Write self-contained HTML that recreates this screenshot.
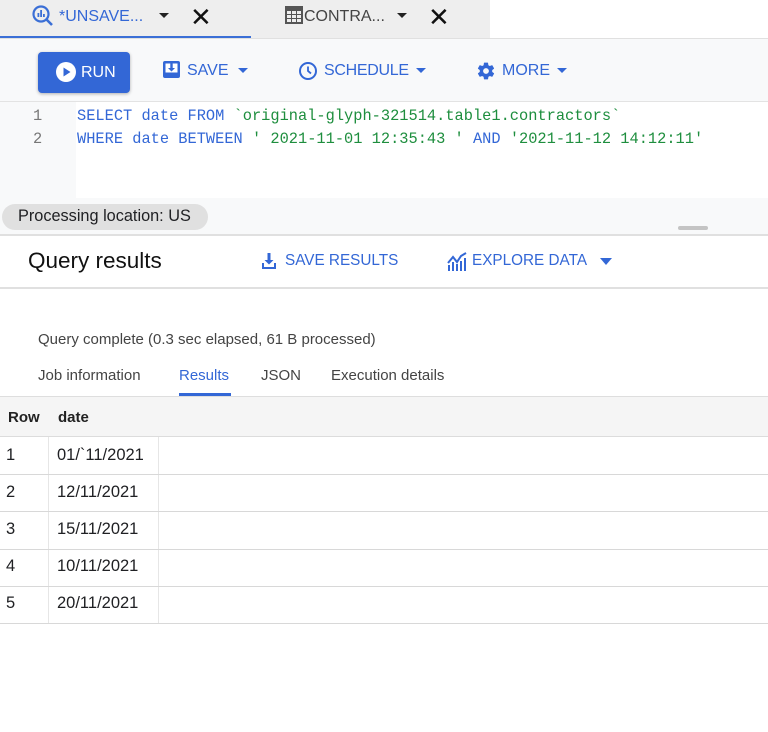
<!DOCTYPE html>
<html><head><meta charset="utf-8"><style>
*{margin:0;padding:0;box-sizing:border-box}
body{width:768px;height:732px;background:#fff;font-family:"Liberation Sans",sans-serif;position:relative;overflow:hidden;color:#202124}
.a{position:absolute;white-space:nowrap}
.blue{color:#3367d6}
.mono{font-family:"Liberation Mono",monospace;font-size:15.35px}
</style></head><body>
<div class="a" style="left:0;top:0;width:490px;height:38px;background:#eeeeee"></div>
<div class="a" style="left:0;top:36px;width:251px;height:3px;background:#3b6fd6"></div>
<div class="a" style="left:0;top:38px;width:768px;height:1px;background:#e0e0e0"></div>
<svg class="a" style="left:31px;top:4px" width="24" height="22" viewBox="0 0 24 22"><circle cx="10" cy="10" r="7.5" fill="none" stroke="#3b6fd6" stroke-width="2.2"/><line x1="15" y1="15" x2="21" y2="21" stroke="#3b6fd6" stroke-width="2.6"/><rect x="6.5" y="9" width="1.8" height="4" fill="#3b6fd6"/><rect x="9.2" y="6" width="1.8" height="7" fill="#3b6fd6"/><rect x="12" y="10" width="1.8" height="3" fill="#3b6fd6"/></svg>
<div class="a blue" style="left:59px;top:8px;font-size:16px">*UNSAVE...</div>
<div class="a" style="left:159px;top:13px;border-left:5px solid transparent;border-right:5px solid transparent;border-top:5px solid #222"></div>
<div class="a" style="left:190px;top:2px;font-size:26px;color:#111">✕</div>
<svg class="a" style="left:285px;top:6px" width="18" height="18" viewBox="0 0 18 18"><rect x="0" y="0" width="18" height="18" fill="#555"/><g fill="#eee"><rect x="2" y="5" width="4" height="3"/><rect x="7" y="5" width="4" height="3"/><rect x="12" y="5" width="4" height="3"/><rect x="2" y="9" width="4" height="3"/><rect x="7" y="9" width="4" height="3"/><rect x="12" y="9" width="4" height="3"/><rect x="2" y="13" width="4" height="3"/><rect x="7" y="13" width="4" height="3"/><rect x="12" y="13" width="4" height="3"/></g></svg>
<div class="a" style="left:304px;top:8px;font-size:16px;color:#444">CONTRA...</div>
<div class="a" style="left:397px;top:13px;border-left:5px solid transparent;border-right:5px solid transparent;border-top:5px solid #222"></div>
<div class="a" style="left:428px;top:2px;font-size:26px;color:#111">✕</div>
<div class="a" style="left:0;top:39px;width:768px;height:62px;background:#f8f9fa"></div>
<div class="a" style="left:38px;top:52px;width:92px;height:41px;background:#3367d6;border-radius:4px;box-shadow:0 1px 3px rgba(0,0,0,.3)"></div>
<svg class="a" style="left:56px;top:62px" width="20" height="20" viewBox="0 0 20 20"><circle cx="10" cy="10" r="10" fill="#fff"/><path d="M7.5 5.5L14.5 10L7.5 14.5Z" fill="#3367d6"/></svg>
<div class="a" style="left:81px;top:64px;font-size:16px;color:#fff">RUN</div>
<svg class="a" style="left:162px;top:60px" width="19" height="19" viewBox="0 0 19 19"><rect x="1" y="1" width="17" height="17" rx="2" fill="#3367d6"/><rect x="3.5" y="3.5" width="12" height="9" fill="#fff"/><path d="M8.3 3.5h2.4v4.5h2.3L9.5 11.5 6 8h2.3z" fill="#3367d6"/></svg>
<div class="a blue" style="left:187px;top:62px;font-size:16px">SAVE</div>
<div class="a" style="left:238px;top:68px;border-left:5px solid transparent;border-right:5px solid transparent;border-top:5px solid #3367d6"></div>
<svg class="a" style="left:298px;top:61px" width="20" height="20" viewBox="0 0 20 20"><circle cx="10" cy="10" r="8" fill="none" stroke="#3367d6" stroke-width="2"/><path d="M10 5.5V10l3 2.5" fill="none" stroke="#3367d6" stroke-width="1.8"/></svg>
<div class="a blue" style="left:324px;top:62px;font-size:16px;letter-spacing:-0.3px">SCHEDULE</div>
<div class="a" style="left:416px;top:68px;border-left:5px solid transparent;border-right:5px solid transparent;border-top:5px solid #3367d6"></div>
<svg class="a" style="left:476px;top:61px" width="20" height="20" viewBox="0 0 24 24"><path fill="#3367d6" d="M19.4 13c.04-.33.06-.66.06-1s-.02-.67-.06-1l2.1-1.650c.2-.15.25-.42.13-.64l-2-3.460c-.12-.22-.39-.3-.61-.22l-2.490 1c-.52-.4-1.080-.73-1.690-.98l-.38-2.650A.49.49 0 0 0 14 2h-4c-.25 0-.46.18-.49.42l-.38 2.650c-.61.25-1.170.59-1.690.98l-2.490-1c-.23-.09-.49 0-.61.22l-2 3.460c-.13.22-.07.49.12.64L4.570 11c-.04.33-.07.67-.07 1s.03.67.07 1l-2.110 1.650c-.19.15-.24.42-.12.64l2 3.460c.12.22.39.3.61.22l2.490-1c.52.4 1.080.73 1.690.98l.38 2.650c.03.24.24.42.49.42h4c.25 0 .46-.18.49-.42l.38-2.650c.61-.25 1.170-.59 1.690-.98l2.490 1c.23.09.49 0 .61-.22l2-3.460c.12-.22.07-.49-.12-.64L19.4 13zM12 15.5A3.5 3.5 0 1 1 12 8.5a3.5 3.5 0 0 1 0 7z"/></svg>
<div class="a blue" style="left:502px;top:62px;font-size:16px">MORE</div>
<div class="a" style="left:557px;top:68px;border-left:5px solid transparent;border-right:5px solid transparent;border-top:5px solid #3367d6"></div>
<div class="a" style="left:0;top:101px;width:768px;height:1px;background:#e3e3e3"></div>
<div class="a" style="left:0;top:102px;width:76px;height:96px;background:#f8f9fa"></div>
<div class="a" style="left:0;top:198px;width:768px;height:37px;background:#f8f9fa"></div>
<div class="a mono" style="left:33px;top:107px;color:#777">1</div>
<div class="a mono" style="left:33px;top:130px;color:#777">2</div>
<div class="a mono" style="left:77px;top:107px"><span class="blue">SELECT date FROM</span> <span style="color:#1e8e3e">`original-glyph-321514.table1.contractors`</span></div>
<div class="a mono" style="left:77px;top:130px"><span class="blue">WHERE date BETWEEN</span> <span style="color:#1e8e3e">' 2021-11-01 12:35:43 '</span> <span class="blue">AND</span> <span style="color:#1e8e3e">'2021-11-12 14:12:11'</span></div>
<div class="a" style="left:2px;top:204px;width:206px;height:26px;background:#e0e0e0;border-radius:13px"></div>
<div class="a" style="left:18px;top:207px;font-size:16.3px;color:#202124">Processing location: US</div>
<div class="a" style="left:678px;top:226px;width:30px;height:4px;background:#c4c4c4;border-radius:2px"></div>
<div class="a" style="left:0;top:234px;width:768px;height:2px;background:#e0e0e0"></div>
<div class="a" style="left:28px;top:248px;font-size:22.5px;color:#111">Query results</div>
<svg class="a" style="left:261px;top:252px" width="16" height="18" viewBox="0 0 16 18"><path d="M6.5 1h3v7h3L8 12.5 3.5 8h3z" fill="#3367d6"/><path d="M1 11v6h14v-6h-2v4H3v-4z" fill="#3367d6"/></svg>
<div class="a blue" style="left:285px;top:252px;font-size:15.3px">SAVE RESULTS</div>
<svg class="a" style="left:447px;top:252px" width="20" height="19" viewBox="0 0 20 19"><g fill="#3367d6"><rect x="1" y="13" width="2" height="6"/><rect x="5" y="10" width="2" height="9"/><rect x="9" y="12" width="2" height="7"/><rect x="13" y="9" width="2" height="10"/><rect x="17" y="6" width="2" height="13"/></g><path d="M1 11L6 5l4 5 4-6 5-3" fill="none" stroke="#3367d6" stroke-width="2"/></svg>
<div class="a blue" style="left:472px;top:252px;font-size:15.3px">EXPLORE DATA</div>
<div class="a" style="left:600px;top:258px;border-left:6px solid transparent;border-right:6px solid transparent;border-top:7px solid #3367d6"></div>
<div class="a" style="left:0;top:287px;width:768px;height:2px;background:#e0e0e0"></div>
<div class="a" style="left:38px;top:331px;font-size:15px;color:#444">Query complete (0.3 sec elapsed, 61 B processed)</div>
<div class="a" style="left:38px;top:367px;font-size:15px;color:#444">Job information</div>
<div class="a blue" style="left:179px;top:367px;font-size:15px">Results</div>
<div class="a" style="left:179px;top:393px;width:52px;height:3px;background:#3367d6"></div>
<div class="a" style="left:261px;top:367px;font-size:15px;color:#444">JSON</div>
<div class="a" style="left:331px;top:367px;font-size:15px;color:#444">Execution details</div>
<div class="a" style="left:0;top:396px;width:768px;height:41px;background:#f5f5f5;border-top:1px solid #dedede;border-bottom:1px solid #dcdcdc"></div>
<div class="a" style="left:8px;top:409px;font-size:15px;font-weight:bold;color:#222">Row</div>
<div class="a" style="left:58px;top:409px;font-size:15px;font-weight:bold;color:#222">date</div>
<div class="a" style="left:48px;top:437px;width:1px;height:187px;background:#e6e6e6"></div>
<div class="a" style="left:158px;top:437px;width:1px;height:187px;background:#e6e6e6"></div>
<div class="a" style="left:0;top:474px;width:768px;height:1px;background:#d8d8d8"></div>
<div class="a" style="left:0;top:511px;width:768px;height:1px;background:#d8d8d8"></div>
<div class="a" style="left:0;top:549px;width:768px;height:1px;background:#d8d8d8"></div>
<div class="a" style="left:0;top:586px;width:768px;height:1px;background:#d8d8d8"></div>
<div class="a" style="left:0;top:623px;width:768px;height:1px;background:#d8d8d8"></div>
<div class="a" style="left:6px;top:446px;font-size:16.5px">1</div><div class="a" style="left:57px;top:446px;font-size:16.5px">01/`11/2021</div>
<div class="a" style="left:6px;top:483px;font-size:16.5px">2</div><div class="a" style="left:57px;top:483px;font-size:16.5px">12/11/2021</div>
<div class="a" style="left:6px;top:520px;font-size:16.5px">3</div><div class="a" style="left:57px;top:520px;font-size:16.5px">15/11/2021</div>
<div class="a" style="left:6px;top:557px;font-size:16.5px">4</div><div class="a" style="left:57px;top:557px;font-size:16.5px">10/11/2021</div>
<div class="a" style="left:6px;top:594px;font-size:16.5px">5</div><div class="a" style="left:57px;top:594px;font-size:16.5px">20/11/2021</div>
</body></html>
